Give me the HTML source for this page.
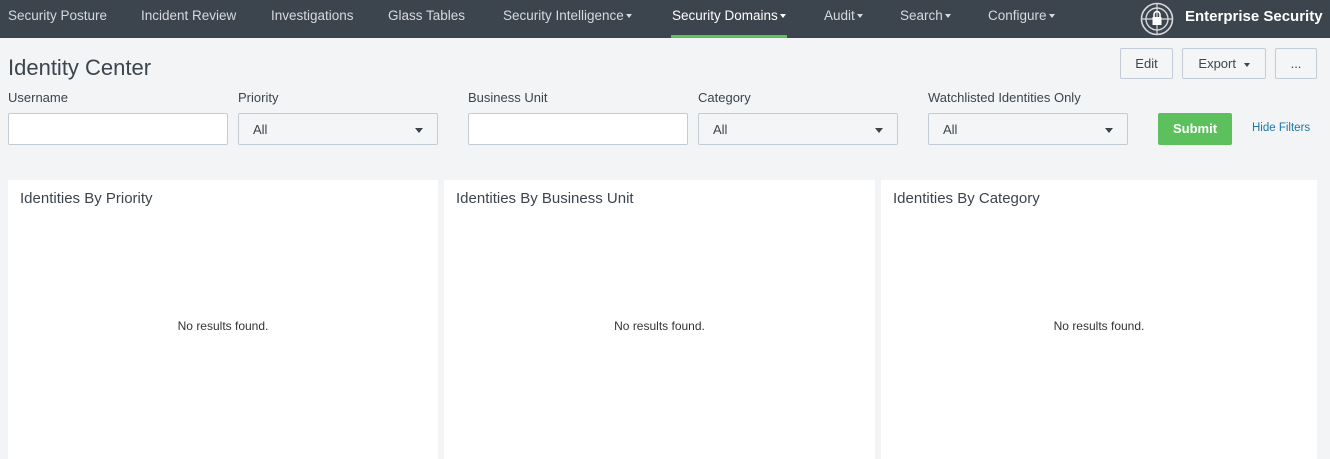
<!DOCTYPE html>
<html><head><meta charset="utf-8"><style>
*{box-sizing:border-box;margin:0;padding:0}
body{width:1330px;height:459px;overflow:hidden;background:#f2f4f5;font-family:"Liberation Sans",sans-serif;color:#3c444d;position:relative}
.nav{position:absolute;left:0;top:0;width:1330px;height:38px;background:#3c444d}
.nav span{position:absolute;top:8px;font-size:13.5px;color:#d7dadd;white-space:nowrap}
.nav .act{color:#fff}
.car{display:inline-block;width:0;height:0;border-left:3.5px solid transparent;border-right:3.5px solid transparent;border-top:4px solid currentColor;vertical-align:middle;margin-left:2px}
.ul{position:absolute;left:671px;top:35px;width:116px;height:3px;background:#5cc05c}
.abs{position:absolute}
.lbl{position:absolute;top:90px;font-size:13px;color:#3c444d}
.inp{position:absolute;top:113px;width:220px;height:32px;background:#fff;border:1px solid #c3cbd4;border-radius:2px}
.sel{position:absolute;top:113px;width:200px;height:32px;background:#f4f5f6;border:1px solid #c3cbd4;border-radius:2px;font-size:13px;padding:8px 14px}
.sel:after{content:"";position:absolute;right:14px;top:14px;border-left:4px solid transparent;border-right:4px solid transparent;border-top:5px solid #3c444d}
.btn{position:absolute;top:48px;height:31px;background:#f4f5f6;border:1px solid #c3cbd4;border-radius:2px;font-size:13px;text-align:center;line-height:29px;color:#3c444d}
.panel{position:absolute;top:180px;height:279px;background:#fff}
.panel h3{position:absolute;left:12px;top:10px;font-size:15px;font-weight:normal;color:#3c444d}
.panel p{position:absolute;top:139px;width:100%;text-align:center;font-size:12px;color:#333}
</style></head><body>
<div class="nav">
<span style="left:8px">Security Posture</span>
<span style="left:141px">Incident Review</span>
<span style="left:271px">Investigations</span>
<span style="left:388px">Glass Tables</span>
<span style="left:503px">Security Intelligence<i class="car"></i></span>
<span class="act" style="left:672px">Security Domains<i class="car"></i></span>
<span style="left:824px">Audit<i class="car"></i></span>
<span style="left:900px">Search<i class="car"></i></span>
<span style="left:988px">Configure<i class="car"></i></span>
<svg class="abs" style="left:1140px;top:2px" width="34" height="34" viewBox="0 0 34 34"><circle cx="17" cy="17" r="15.5" fill="none" stroke="#d7dadd" stroke-width="1.6"/><circle cx="17" cy="17" r="11" fill="none" stroke="#d7dadd" stroke-width="1.4"/><path d="M17 2v30M2 17h30" stroke="#d7dadd" stroke-width="1.2"/><rect x="12.5" y="15" width="9" height="8" fill="#fff"/><path d="M14 15v-2.5a3 3 0 0 1 6 0V15" fill="none" stroke="#fff" stroke-width="1.6"/></svg>
<span class="act" style="left:1185px;top:8px;font-size:15px;font-weight:bold">Enterprise Security</span>
<div class="ul"></div>
</div>
<div class="abs" style="left:8px;top:55px;font-size:22px;color:#3c444d">Identity Center</div>
<div class="btn" style="left:1120px;width:53px">Edit</div>
<div class="btn" style="left:1182px;width:84px">Export <i class="car" style="margin-left:4px"></i></div>
<div class="btn" style="left:1275px;width:42px">...</div>
<div class="lbl" style="left:8px">Username</div>
<div class="lbl" style="left:238px">Priority</div>
<div class="lbl" style="left:468px">Business Unit</div>
<div class="lbl" style="left:698px">Category</div>
<div class="lbl" style="left:928px">Watchlisted Identities Only</div>
<div class="inp" style="left:8px"></div>
<div class="sel" style="left:238px">All</div>
<div class="inp" style="left:468px"></div>
<div class="sel" style="left:698px">All</div>
<div class="sel" style="left:928px">All</div>
<div class="abs" style="left:1158px;top:113px;width:74px;height:32px;background:#5cc05c;border-radius:2px;color:#fff;font-weight:bold;font-size:13px;text-align:center;line-height:32px">Submit</div>
<div class="abs" style="left:1252px;top:122px;font-size:11.5px;color:#1e76a8">Hide Filters</div>
<div class="panel" style="left:8px;width:430px"><h3>Identities By Priority</h3><p>No results found.</p></div>
<div class="panel" style="left:444px;width:431px"><h3>Identities By Business Unit</h3><p>No results found.</p></div>
<div class="panel" style="left:881px;width:436px"><h3>Identities By Category</h3><p>No results found.</p></div>
</body></html>
